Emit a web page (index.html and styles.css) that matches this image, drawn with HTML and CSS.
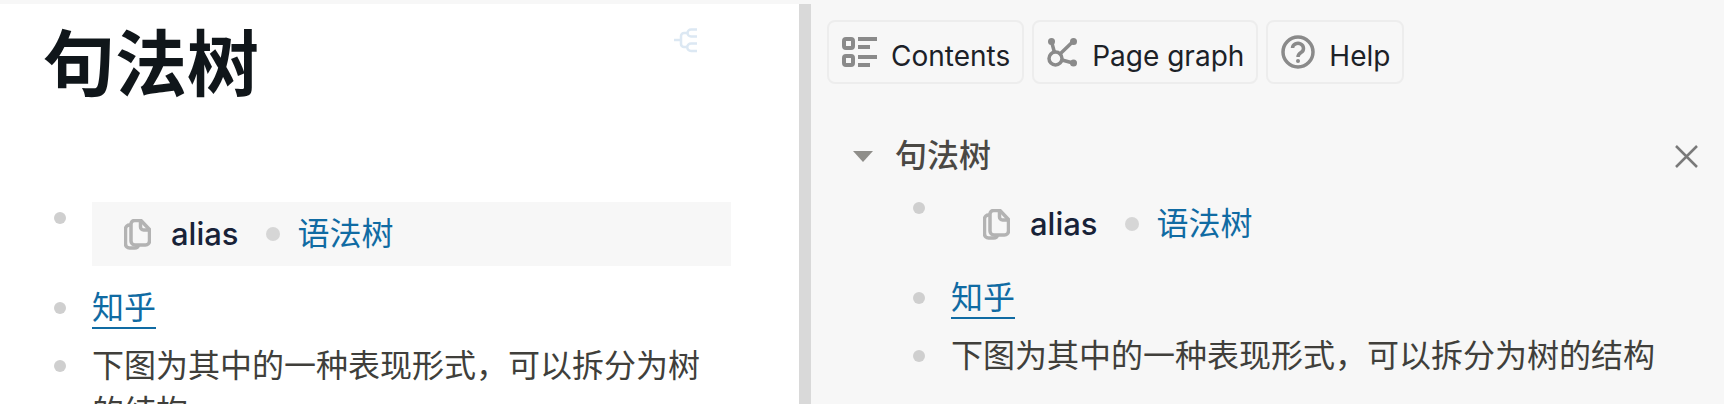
FILE: index.html
```html
<!DOCTYPE html>
<html lang="zh">
<head>
    <meta charset="UTF-8">
    <title>句法树</title>
    <link rel="stylesheet" href="styles.css">
</head>
<body>
    <div class="layout">
        <main class="page">
            <div class="page-head">
                <h1 class="page-title">句法树</h1>
                <svg class="outline-icon" width="26" height="26" viewBox="0 0 26 26" fill="none" stroke="#dce8f3" stroke-width="2.500">
                    <path d="M3 12h7"/>
                    <path d="M17 5h-4a3 3 0 0 0-3 3v8a3 3 0 0 0 3 3h4"/>
                    <path d="M26 1.500h-6a3.500 3.500 0 0 0 0 7h6"/>
                    <path d="M26 15.500h-6a3.750 3.750 0 0 0 0 7.500h6"/>
                </svg>
            </div>
            <ul class="tree-list">
                <li class="tree-item">
                    <span class="bullet bullet-alias"></span>
                    <div class="alias-box alias-box-shaded">
                        <svg class="doc-icon" width="27" height="31" viewBox="0 0 27 31" fill="none" stroke="#b3b3b3" stroke-width="3.500">
                            <path d="M7 6H6a4 4 0 0 0-4.500 4v15a4 4 0 0 0 4 4h5a4 4 0 0 0 4-3"/>
                            <path d="M7 5a3.500 3.500 0 0 1 3.500-3.500H17l8.500 9V22a4 4 0 0 1-4 4H11a4 4 0 0 1-4-4z"/>
                            <path d="M16.500 2v6a3 3 0 0 0 3 3h6"/>
                        </svg>
                        <span class="alias-label">alias</span>
                        <span class="alias-dot"></span>
                        <a class="tag-link" href="#">语法树</a>
                    </div>
                </li>
                <li class="tree-item">
                    <span class="bullet"></span>
                    <div class="item-text"><a class="page-link" href="#">知乎</a></div>
                </li>
                <li class="tree-item">
                    <span class="bullet"></span>
                    <div class="item-text">下图为其中的一种表现形式，可以拆分为树的结构</div>
                </li>
            </ul>
        </main>

        <div class="divider"></div>

        <aside class="sidebar">
            <div class="toolbar">
                <button class="tool-button">
                    <svg width="35" height="30" viewBox="0 0 35 30" fill="none" stroke="#8a8a8a" stroke-width="4">
                        <rect x="2" y="2" width="9" height="9" rx="2"/>
                        <rect x="2" y="19" width="9" height="9" rx="2"/>
                        <path d="M16 2h19M16 10h12M16 20h19M16 28h12"/>
                    </svg>
                    <span class="tool-label">Contents</span>
                </button>
                <button class="tool-button">
                    <svg width="31" height="31" viewBox="0 0 31 31" fill="none" stroke="#8a8a8a" stroke-width="3.500">
                        <circle cx="8.500" cy="21.500" r="6.500"/>
                        <path d="M4.500 4.500l3 11M26 4.500L13 17M26 26l-11-3"/>
                        <circle cx="4.500" cy="4.500" r="3.500" fill="#8a8a8a" stroke="none"/>
                        <circle cx="26.500" cy="4.500" r="3.500" fill="#8a8a8a" stroke="none"/>
                        <circle cx="26.500" cy="26" r="3.500" fill="#8a8a8a" stroke="none"/>
                    </svg>
                    <span class="tool-label">Page graph</span>
                </button>
                <button class="tool-button">
                    <svg width="34" height="34" viewBox="0 0 34 34" fill="none" stroke="#8a8a8a" stroke-width="3.500">
                        <circle cx="17" cy="17" r="15"/>
                        <path d="M11.500 13a5.500 5 0 1 1 8.500 4.500c-2 1.300-3 2.300-3 4.500"/>
                        <circle cx="17" cy="26" r="2" fill="#8a8a8a" stroke="none"/>
                    </svg>
                    <span class="tool-label">Help</span>
                </button>
            </div>

            <div class="outline-head">
                <span class="caret"></span>
                <span class="outline-title">句法树</span>
                <svg class="close-icon" width="23" height="23" viewBox="0 0 23 23" fill="none" stroke="#7a7a7a" stroke-width="2.500">
                    <path d="M1 1l21 21M22 1L1 22"/>
                </svg>
            </div>

            <ul class="tree-list">
                <li class="tree-item">
                    <span class="bullet bullet-alias"></span>
                    <div class="alias-box">
                        <svg class="doc-icon" width="27" height="31" viewBox="0 0 27 31" fill="none" stroke="#b3b3b3" stroke-width="3.500">
                            <path d="M7 6H6a4 4 0 0 0-4.500 4v15a4 4 0 0 0 4 4h5a4 4 0 0 0 4-3"/>
                            <path d="M7 5a3.500 3.500 0 0 1 3.500-3.500H17l8.500 9V22a4 4 0 0 1-4 4H11a4 4 0 0 1-4-4z"/>
                            <path d="M16.500 2v6a3 3 0 0 0 3 3h6"/>
                        </svg>
                        <span class="alias-label">alias</span>
                        <span class="alias-dot"></span>
                        <a class="tag-link" href="#">语法树</a>
                    </div>
                </li>
                <li class="tree-item">
                    <span class="bullet"></span>
                    <div class="item-text"><a class="page-link" href="#">知乎</a></div>
                </li>
                <li class="tree-item">
                    <span class="bullet"></span>
                    <div class="item-text">下图为其中的一种表现形式，可以拆分为树的结构</div>
                </li>
            </ul>
        </aside>
    </div>
</body>
</html>
```

FILE: styles.css
```css
/* Basic reset */
* {
    margin: 0;
    padding: 0;
    box-sizing: border-box;
}

html, body {
    height: 100%;
    overflow: hidden;
}

body {
    background-color: #f7f7f7;
    color: #403f3b;
    font-family: 'Inter', 'Noto Sans CJK SC', sans-serif;
    font-size: 32px;
    line-height: 46px;
}

.layout {
    display: grid;
    grid-template-columns: 799px 12px 1fr;
    height: 404px;
}

/* Left page */
.page {
    background-color: #fff;
    margin-top: 4px;
    padding: 0 68px 0 30px;
}

.page-head {
    display: flex;
    justify-content: space-between;
    align-items: flex-start;
    height: 198px;
    padding-left: 13px;
}

.page-title {
    color: #10161a;
    font-size: 72px;
    font-weight: 600;
    line-height: 100px;
    margin-top: 10px;
}

.outline-icon {
    margin-top: 24px;
    margin-right: 34px;
}

.divider {
    background-color: #d9d9d9;
    margin-top: 4px;
}

/* Right panel */
.sidebar {
    padding: 20px 26px 0 16px;
    min-width: 0;
}

.toolbar {
    display: flex;
    gap: 8px;
}

.tool-button {
    display: flex;
    align-items: center;
    gap: 14px;
    height: 64px;
    padding: 0 12px 0 13px;
    background: transparent;
    border: 2px solid #ededed;
    border-radius: 8px;
    color: #1c2127;
    font-family: inherit;
    font-size: 28px;
}

.tool-label {
    padding-top: 8px;
}

.outline-head {
    display: flex;
    align-items: center;
    height: 46px;
    margin-top: 49px;
    padding-left: 26px;
}

.caret {
    width: 0;
    height: 0;
    border-left: 10px solid transparent;
    border-right: 10px solid transparent;
    border-top: 11px solid #8f8e8a;
}

.outline-title {
    margin-left: 22px;
    font-weight: 500;
    color: #4a4844;
}

.close-icon {
    margin-left: auto;
}

.sidebar .tree-list {
    margin-top: 13px;
    padding-left: 86px;
}

/* Shared list */
.tree-list {
    list-style: none;
    padding-left: 24px;
}

.tree-item {
    display: flex;
    margin-bottom: 12px;
}

.bullet {
    flex: none;
    width: 12px;
    height: 12px;
    margin: 17px 26px 0 0;
    border-radius: 50%;
    background-color: #cfcfcf;
}

.bullet-alias {
    margin-top: 10px;
}

.alias-box {
    flex: 1;
    display: flex;
    align-items: center;
    height: 64px;
    margin-bottom: 7px;
    padding-left: 32px;
}

.alias-box-shaded {
    background-color: #f7f7f7;
}

.alias-label {
    margin-left: 20px;
    color: #182238;
    font-size: 31px;
    font-weight: 500;
}

.alias-dot {
    width: 14px;
    height: 14px;
    margin: 0 18px 0 27px;
    border-radius: 50%;
    background-color: #d6d6d6;
}

.tag-link {
    color: #106ba3;
    text-decoration: none;
}

.page-link {
    color: #106ba3;
    text-decoration: none;
    border-bottom: 2px solid #106ba3;
}
```
